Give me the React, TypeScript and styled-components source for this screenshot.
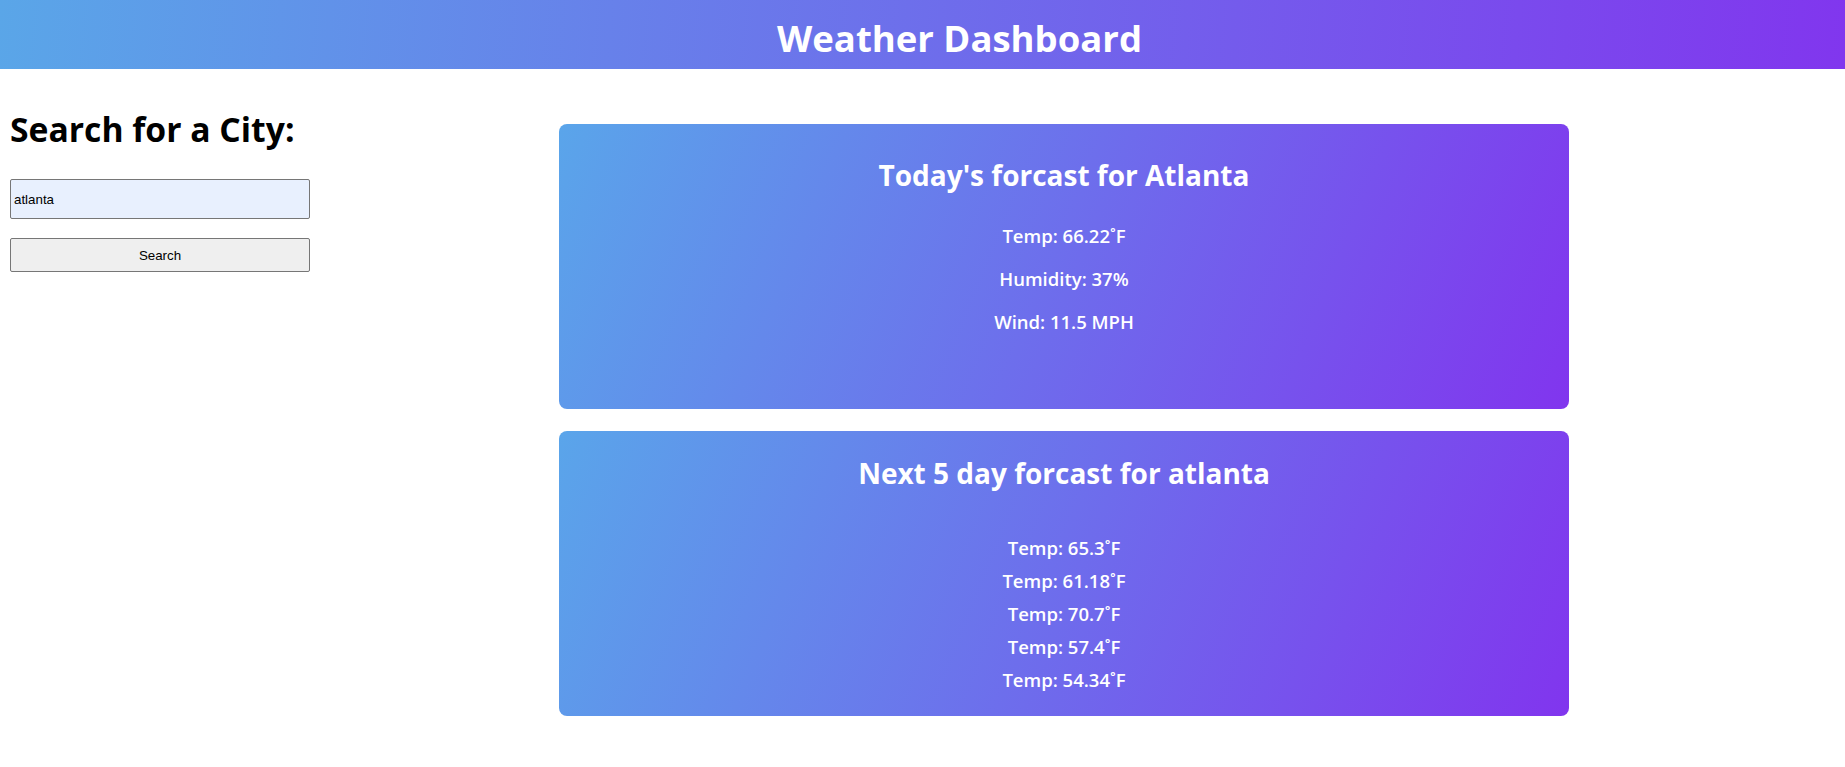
import React from 'react'
import styled, { createGlobalStyle } from 'styled-components'

const GlobalStyle = createGlobalStyle`
  html, body {
    margin: 0;
    padding: 0;
    background: #ffffff;
  }
  body {
    font-family: "Open Sans", "DejaVu Sans", sans-serif;
  }
`

const StyledHeader = styled('header')`
  box-sizing: border-box;
  height: 69px;
  background: linear-gradient(95deg, #5aa6e8, #8136ee);
  padding: 8px 0 0 74px;
  display: flex;
  align-items: center;
  justify-content: center;
`

const StyledTitle = styled('h1')`
  margin: 0;
  color: #ffffff;
  font-size: 36.5px;
  font-weight: 700;
  line-height: 1;
`

const StyledPage = styled('div')`
  display: grid;
  grid-template-columns: 559px 1010px;
  align-items: start;
`

const StyledSidebar = styled('aside')`
  padding: 0 0 0 10px;
  display: flex;
  flex-direction: column;
`

const StyledSearchHeading = styled('h2')`
  font-size: 33.7px;
  font-weight: 700;
  line-height: 40px;
  margin: 40px 0 30px;
  color: #000000;
`

const StyledInput = styled('input')`
  box-sizing: border-box;
  width: 300px;
  height: 40px;
  margin: 0 0 19px;
  padding: 0 3px;
  border: 1px solid #767676;
  border-radius: 2px;
  background: #e8f0fe;
  font-family: "Liberation Sans", Arial, sans-serif;
  font-size: 13.33px;
  color: #000000;
`

const StyledButton = styled('button')`
  box-sizing: border-box;
  width: 300px;
  height: 34px;
  border: 1px solid #767676;
  border-radius: 2px;
  background: #efefef;
  font-family: "Liberation Sans", Arial, sans-serif;
  font-size: 13.33px;
  color: #000000;
`

const StyledMain = styled('main')`
  padding-top: 55px;
  display: flex;
  flex-direction: column;
  gap: 22px;
`

const StyledCard = styled('section')<{ topPad: number }>`
  box-sizing: border-box;
  height: 285px;
  padding-top: ${p => p.topPad}px;
  border-radius: 8px;
  background: linear-gradient(112deg, #5aa5ea, #8135ee);
  color: #ffffff;
  text-align: center;
`

const StyledCardHeading = styled('h2')<{ gapBelow: number }>`
  margin: 0 0 ${p => p.gapBelow}px;
  font-size: 28px;
  font-weight: 700;
  line-height: 36px;
`

const StyledStat = styled('p')<{ spacing: number }>`
  margin: 0 0 ${p => p.spacing}px;
  font-size: 18.5px;
  font-weight: 600;
  line-height: 23px;
`

const today = ['Temp: 66.22˚F', 'Humidity: 37%', 'Wind: 11.5 MPH']
const fiveDay = ['Temp: 65.3˚F', 'Temp: 61.18˚F', 'Temp: 70.7˚F', 'Temp: 57.4˚F', 'Temp: 54.34˚F']

const App = () => {
  return (
    <>
      <GlobalStyle />
      <StyledHeader>
        <StyledTitle>Weather Dashboard</StyledTitle>
      </StyledHeader>
      <StyledPage>
        <StyledSidebar>
          <StyledSearchHeading>Search for a City:</StyledSearchHeading>
          <StyledInput defaultValue="atlanta" />
          <StyledButton>Search</StyledButton>
        </StyledSidebar>
        <StyledMain>
          <StyledCard topPad={33}>
            <StyledCardHeading gapBelow={31}>Today's forcast for Atlanta</StyledCardHeading>
            {today.map(line => <StyledStat key={line} spacing={20}>{line}</StyledStat>)}
          </StyledCard>
          <StyledCard topPad={24}>
            <StyledCardHeading gapBelow={45}>Next 5 day forcast for atlanta</StyledCardHeading>
            {fiveDay.map((line, i) => <StyledStat key={i} spacing={10}>{line}</StyledStat>)}
          </StyledCard>
        </StyledMain>
      </StyledPage>
    </>
  )
}

export default App
